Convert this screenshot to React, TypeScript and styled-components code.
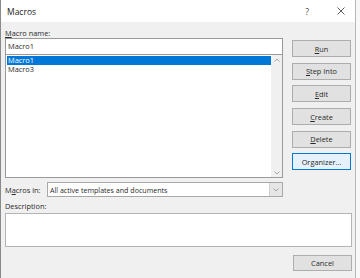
import styled, { createGlobalStyle } from "styled-components";

const GlobalStyle = createGlobalStyle`
    html, body {
        margin: 0;
        padding: 0;
        background: #f7f7f7;
    }
    body {
        font-family: "Open Sans", "Noto Sans", sans-serif;
        color: #2a2a2a;
    }
`;

const Dialog = styled.div`
    width: 354px;
    height: 278px;
    border-left: 1px solid #8a8a8a;
    border-right: 1px solid #b8b8b8;
    background: #f0f0f0;
    display: flex;
    flex-direction: column;
    overflow: hidden;
`;

const TitleBar = styled.div`
    height: 22px;
    background: #ffffff;
    display: flex;
    align-items: center;
    padding-left: 6px;
    font-size: 8.5px;
    color: #222;
`;

const TitleText = styled.span`
    flex: 1;
`;

const TitleIcon = styled.span`
    width: 14px;
    display: flex;
    justify-content: center;
    align-items: center;
    font-size: 8.5px;
    color: #444;
`;

const Body = styled.div`
    padding: 0 3px 0 4px;
    font-size: 7.4px;
`;

const MainGrid = styled.div`
    display: grid;
    grid-template-columns: 278px 59px;
    column-gap: 9px;
`;

const LeftColumn = styled.div`
    display: flex;
    flex-direction: column;
`;

const Label = styled.div<{ $top?: number }>`
    padding-top: ${(p) => p.$top ?? 0}px;
    height: 10px;
    line-height: 10px;
    white-space: nowrap;
`;

const Key = styled.span`
    text-decoration: underline;
`;

const NameInput = styled.div`
    height: 17px;
    box-sizing: border-box;
    border: 1px solid #9a9a9a;
    background: #fff;
    padding-left: 2px;
    line-height: 15px;
`;

const ListBox = styled.div`
    height: 123px;
    box-sizing: border-box;
    border: 1px solid #9a9a9a;
    border-top: none;
    background: #fff;
    display: flex;
    padding: 1px 0 0 1px;
`;

const ListItems = styled.div`
    flex: 1;
    display: flex;
    flex-direction: column;
`;

const ListItem = styled.div<{ $selected?: boolean }>`
    height: 9px;
    line-height: 9px;
    padding-left: 1px;
    background: ${(p) => (p.$selected ? "#0078d7" : "transparent")};
    color: ${(p) => (p.$selected ? "#fff" : "#2a2a2a")};
`;

const ScrollBar = styled.div`
    width: 11px;
    background: #f0f0f0;
    display: flex;
    flex-direction: column;
    justify-content: space-between;
    align-items: center;
    padding: 3px 0 2px;
    margin-top: -1px;
`;

const ComboRow = styled.div`
    margin-top: 4px;
    height: 15px;
    display: flex;
    align-items: center;
`;

const ComboLabel = styled.div`
    width: 42px;
    white-space: nowrap;
`;

const Combo = styled.div`
    flex: 1;
    height: 15px;
    box-sizing: border-box;
    border: 1px solid #a8a8a8;
    background: #fff;
    display: flex;
    align-items: center;
    padding-left: 2px;
`;

const ComboValue = styled.span`
    flex: 1;
    font-size: 7.1px;
`;

const ComboArrow = styled.div`
    width: 12px;
    height: 13px;
    background: #e6e6e6;
    border-left: 1px solid #d0d0d0;
    display: flex;
    align-items: center;
    justify-content: center;
`;

const ButtonColumn = styled.div`
    padding-top: 18px;
    display: flex;
    flex-direction: column;
    gap: 5.7px;
`;

const Button = styled.div<{ $default?: boolean }>`
    height: 17px;
    box-sizing: border-box;
    border: 1px solid ${(p) => (p.$default ? "#0078d7" : "#adadad")};
    background: ${(p) => (p.$default ? "#e5f1fb" : "#e1e1e1")};
    display: flex;
    align-items: center;
    justify-content: center;
    white-space: nowrap;
`;

const Description = styled.div`
    height: 34px;
    box-sizing: border-box;
    border: 1px solid #b4b4b4;
    background: #fff;
    margin-top: 2px;
`;

const Footer = styled.div`
    margin-top: 8px;
    display: flex;
    justify-content: flex-end;
`;

const FooterButton = styled(Button)`
    width: 59px;
    height: 16px;
`;

function Chevron({ up }: { up?: boolean }) {
    return (
        <svg width="6" height="4" viewBox="0 0 6 4">
            <path
                d={up ? "M0.5 3.5 L3 1 L5.5 3.5" : "M0.5 0.5 L3 3 L5.5 0.5"}
                fill="none"
                stroke="#9a9a9a"
                strokeWidth="0.9"
            />
        </svg>
    );
}

export default function App() {
    return (
        <>
            <GlobalStyle />
            <Dialog>
                <TitleBar>
                    <TitleText>Macros</TitleText>
                    <TitleIcon>?</TitleIcon>
                    <TitleIcon style={{ marginLeft: 20, marginRight: 7 }}>
                        <svg width="8" height="8" viewBox="0 0 8 8">
                            <path d="M0.5 0.5 L7.5 7.5 M7.5 0.5 L0.5 7.5" stroke="#333" strokeWidth="0.8" />
                        </svg>
                    </TitleIcon>
                </TitleBar>
                <Body>
                    <MainGrid>
                        <LeftColumn>
                            <Label $top={6}>
                                <Key>M</Key>acro name:
                            </Label>
                            <NameInput>Macro1</NameInput>
                            <ListBox>
                                <ListItems>
                                    <ListItem $selected>Macro1</ListItem>
                                    <ListItem>Macro3</ListItem>
                                </ListItems>
                                <ScrollBar>
                                    <Chevron up />
                                    <Chevron />
                                </ScrollBar>
                            </ListBox>
                            <ComboRow>
                                <ComboLabel>
                                    M<Key>a</Key>cros in:
                                </ComboLabel>
                                <Combo>
                                    <ComboValue>All active templates and documents</ComboValue>
                                    <ComboArrow>
                                        <Chevron />
                                    </ComboArrow>
                                </Combo>
                            </ComboRow>
                        </LeftColumn>
                        <ButtonColumn>
                            <Button>
                                <Key>R</Key>un
                            </Button>
                            <Button>
                                <Key>S</Key>tep Into
                            </Button>
                            <Button>
                                <Key>E</Key>dit
                            </Button>
                            <Button>
                                <Key>C</Key>reate
                            </Button>
                            <Button>
                                <Key>D</Key>elete
                            </Button>
                            <Button $default>Organizer...</Button>
                        </ButtonColumn>
                    </MainGrid>
                    <Label $top={4}>Description:</Label>
                    <Description />
                    <Footer>
                        <FooterButton>Cancel</FooterButton>
                    </Footer>
                </Body>
            </Dialog>
        </>
    );
}
